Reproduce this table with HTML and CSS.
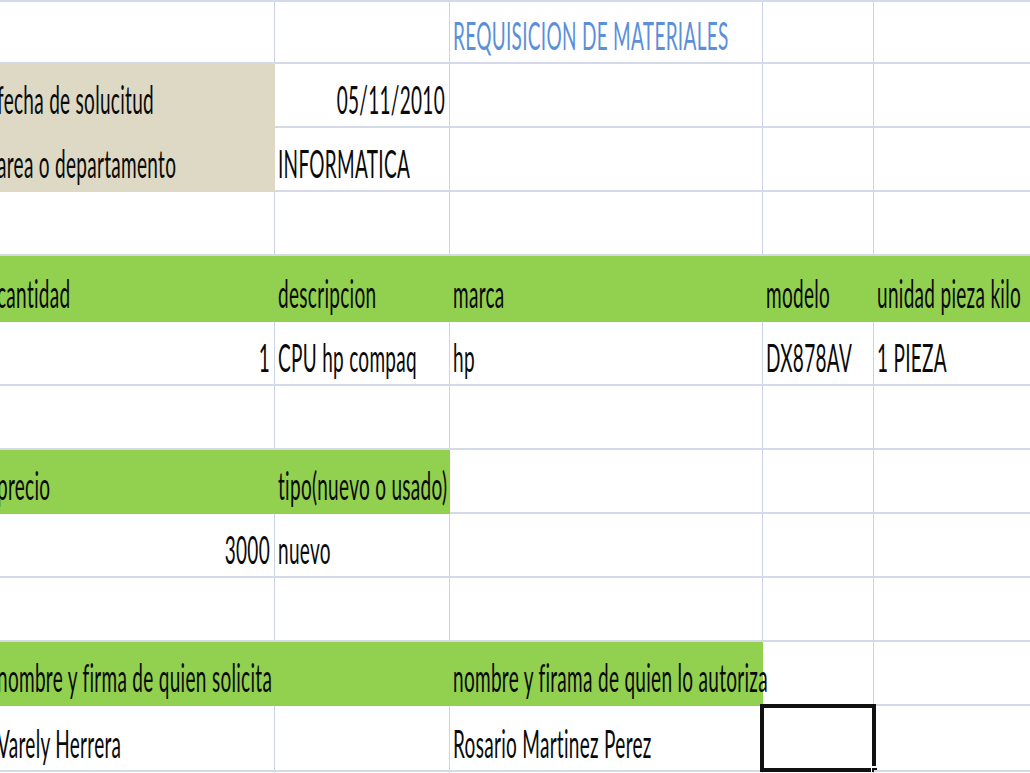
FILE: index.html
```html
<!DOCTYPE html>
<html lang="es">
<head>
<meta charset="utf-8">
<title>Requisicion de materiales</title>
<link rel="stylesheet" href="styles.css">
</head>
<body>
<div class="viewport">
  <div class="sheet">
    <!-- row 1 -->
    <div class="c"></div>
    <div class="c"></div>
    <div class="c title">REQUISICION DE MATERIALES</div>
    <div class="c"></div>
    <div class="c"></div>
    <!-- row 2 -->
    <div class="c beige">fecha de solucitud</div>
    <div class="c num">05/11/2010</div>
    <div class="c"></div>
    <div class="c"></div>
    <div class="c"></div>
    <!-- row 3 -->
    <div class="c beige">area o departamento</div>
    <div class="c">INFORMATICA</div>
    <div class="c"></div>
    <div class="c"></div>
    <div class="c"></div>
    <!-- row 4 -->
    <div class="c"></div>
    <div class="c"></div>
    <div class="c"></div>
    <div class="c"></div>
    <div class="c"></div>
    <!-- row 5 -->
    <div class="c green">cantidad</div>
    <div class="c green">descripcion</div>
    <div class="c green">marca</div>
    <div class="c green">modelo</div>
    <div class="c green">unidad pieza kilo</div>
    <!-- row 6 -->
    <div class="c num">1</div>
    <div class="c">CPU hp compaq</div>
    <div class="c">hp</div>
    <div class="c">DX878AV</div>
    <div class="c">1 PIEZA</div>
    <!-- row 7 -->
    <div class="c"></div>
    <div class="c"></div>
    <div class="c"></div>
    <div class="c"></div>
    <div class="c"></div>
    <!-- row 8 -->
    <div class="c green">precio</div>
    <div class="c green">tipo(nuevo o usado)</div>
    <div class="c"></div>
    <div class="c"></div>
    <div class="c"></div>
    <!-- row 9 -->
    <div class="c num">3000</div>
    <div class="c">nuevo</div>
    <div class="c"></div>
    <div class="c"></div>
    <div class="c"></div>
    <!-- row 10 -->
    <div class="c"></div>
    <div class="c"></div>
    <div class="c"></div>
    <div class="c"></div>
    <div class="c"></div>
    <!-- row 11 -->
    <div class="c green span2">nombre y firma de quien solicita</div>
    <div class="c green">nombre y firama de quien lo autoriza</div>
    <div class="c"></div>
    <div class="c"></div>
    <!-- row 12 -->
    <div class="c">Varely Herrera</div>
    <div class="c"></div>
    <div class="c">Rosario Martinez Perez</div>
    <div class="c selected"><span class="sel"><span class="handle"></span></span></div>
    <div class="c"></div>
    <!-- row 13 -->
    <div class="c"></div>
    <div class="c"></div>
    <div class="c"></div>
    <div class="c"></div>
    <div class="c"></div>
  </div>
</div>
</body>
</html>
```

FILE: styles.css
```css
* { box-sizing: border-box; }

html, body {
  margin: 0;
  padding: 0;
  background: #ffffff;
  overflow: hidden;
}

.viewport {
  width: 1030px;
  height: 773px;
  overflow: hidden;
}

.sheet {
  display: grid;
  grid-template-columns: 281px 175px 313px 111px 170px;
  grid-template-rows: 31px repeat(12, 32.15px);
  margin-left: -6px;
  border-top: 1px solid #d4dae8;
  transform: scaleY(2);
  transform-origin: top left;
  font-family: "Lato", "Open Sans", sans-serif;
  font-size: 19px;
  letter-spacing: 0.3px;
  line-height: 18px;
  color: #0a0a0a;
}

.c {
  display: flex;
  align-items: flex-end;
  padding: 0 3px 4px 3px;
  white-space: nowrap;
  border-right: 1px solid #ccd4e4;
  border-bottom: 1px solid #d4dae8;
  position: relative;
  min-width: 0;
}

.num {
  justify-content: flex-end;
  padding-right: 4px;
}

.title {
  color: #5b8fd8;
}

.beige {
  background: #ddd9c4;
  border-right-color: #ddd9c4;
  border-bottom-color: #ddd9c4;
}

.green {
  background: #92d050;
  border-right-color: #92d050;
  border-bottom-color: #92d050;
}

.span2 {
  grid-column: span 2;
}

.sel {
  position: absolute;
  left: -3px;
  right: -3px;
  top: -1.5px;
  bottom: -1.5px;
  border-style: solid;
  border-color: #111111;
  border-width: 2px 4px 2px 4px;
}

.handle {
  position: absolute;
  right: -6px;
  bottom: -3px;
  width: 7px;
  height: 4px;
  background: #111111;
  border-style: solid;
  border-color: #ffffff;
  border-width: 0.5px 1px;
}
```
